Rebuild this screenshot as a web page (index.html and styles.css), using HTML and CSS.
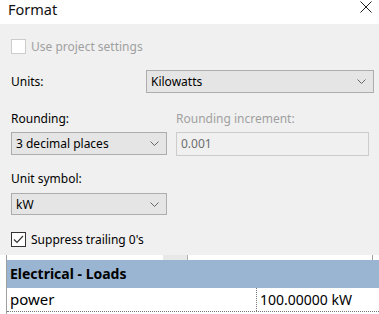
FILE: index.html
```html
<!DOCTYPE html>
<html>
<head>
    <title>Format</title>
    <link rel="stylesheet" href="styles.css">
</head>
<body>
    <div class="titlebar">
        <span class="title">Format</span>
        <svg class="close" width="12" height="12" viewBox="0 0 12 12">
            <path d="M0.5 0.5 L11.5 11.5 M11.5 0.5 L0.5 11.5" stroke="#222" stroke-width="1" fill="none"/>
        </svg>
    </div>

    <div class="panel">
        <div class="check-row disabled">
            <span class="box"></span>
            <span>Use project settings</span>
        </div>

        <div class="units-row">
            <span class="label">Units:</span>
            <div class="combo wide">
                <span>Kilowatts</span>
                <svg class="chev" width="9" height="5" viewBox="0 0 9 5"><path d="M0.5 0.5 L4.5 4.5 L8.5 0.5" stroke="#666" fill="none"/></svg>
            </div>
        </div>

        <div class="pair">
            <div class="col">
                <span class="label">Rounding:</span>
                <div class="combo">
                    <span>3 decimal places</span>
                    <svg class="chev" width="9" height="5" viewBox="0 0 9 5"><path d="M0.5 0.5 L4.5 4.5 L8.5 0.5" stroke="#666" fill="none"/></svg>
                </div>
            </div>
            <div class="col right">
                <span class="label muted">Rounding increment:</span>
                <div class="textbox">0.001</div>
            </div>
        </div>

        <div class="col symbol">
            <span class="label">Unit symbol:</span>
            <div class="combo">
                <span>kW</span>
                <svg class="chev" width="9" height="5" viewBox="0 0 9 5"><path d="M0.5 0.5 L4.5 4.5 L8.5 0.5" stroke="#666" fill="none"/></svg>
            </div>
        </div>

        <div class="check-row suppress">
            <span class="box checked">
                <svg width="13" height="13" viewBox="0 0 13 13"><path d="M2 6.5 L5 9.5 L11 3" stroke="#333" stroke-width="1.2" fill="none"/></svg>
            </span>
            <span>Suppress trailing 0's</span>
        </div>
    </div>

    <div class="grid">
        <div class="strip">
            <span class="thumb"></span>
            <span class="edge"></span>
        </div>
        <div class="group">Electrical - Loads</div>
        <div class="row">
            <span class="name">power</span>
            <span class="value">100.00000 kW</span>
        </div>
    </div>
</body>
</html>
```

FILE: styles.css
```css
body {
    margin: 0;
    width: 379px;
    height: 314px;
    overflow: hidden;
    background-color: #fff;
    font-family: "Noto Sans", "Open Sans", sans-serif;
    font-size: 12px;
    color: #000;
}

.titlebar {
    height: 24px;
    box-sizing: border-box;
    display: flex;
    align-items: flex-start;
    justify-content: space-between;
    padding: 2px 7px 0 8px;
    background-color: #fff;
}

.title {
    font-size: 14.5px;
    line-height: 14px;
    color: #111;
}

.close {
    margin-top: -1px;
}

.panel {
    height: 231px;
    box-sizing: border-box;
    padding: 14px 5px 0 11px;
    background-color: #f0f0f0;
}

.check-row {
    display: flex;
    align-items: center;
    gap: 5px;
    height: 16px;
}

.check-row.disabled {
    color: #a0a0a0;
}

.box {
    width: 13px;
    height: 13px;
    border: 1px solid #cccccc;
    background-color: #fff;
    display: flex;
}

.box.checked {
    border-color: #333;
}

.units-row {
    display: flex;
    align-items: center;
    margin-top: 16px;
}

.units-row .label {
    width: 135px;
}

.combo {
    display: flex;
    align-items: center;
    justify-content: space-between;
    box-sizing: border-box;
    height: 23px;
    width: 156px;
    padding: 0 7px 0 4px;
    border: 1px solid #adadad;
    background-color: #e5e5e5;
}

.combo.wide {
    width: 228px;
}

.pair {
    display: flex;
    margin-top: 18px;
}

.col {
    display: flex;
    flex-direction: column;
    gap: 5px;
}

.label {
    height: 16px;
    line-height: 16px;
}

.muted {
    color: #a0a0a0;
}

.right {
    margin-left: 9px;
}

.textbox {
    box-sizing: border-box;
    height: 24px;
    width: 193px;
    line-height: 22px;
    padding-left: 4px;
    border: 1px solid #cccccc;
    background-color: #f0f0f0;
    color: #6d6d6d;
}

.symbol {
    margin-top: 15px;
    gap: 6px;
}

.symbol .combo {
    height: 22px;
}

.suppress {
    margin-top: 16px;
}

.grid {
    height: 59px;
    border-left: 1px solid #a0a0a0;
    margin-left: 6px;
    background-color: #fff;
}

.strip {
    height: 5px;
    display: flex;
}

.thumb {
    width: 24px;
    height: 5px;
    margin-left: 156px;
    background-color: #e8e8e8;
    border-right: 1px solid #b0b0b0;
}

.edge {
    margin-left: auto;
    margin-right: 6px;
    width: 1px;
    background-color: #a0a0a0;
}

.group {
    height: 28px;
    line-height: 28px;
    padding-left: 3px;
    font-size: 14px;
    font-weight: bold;
    background-color: #9ab5d1;
}

.row {
    display: flex;
    height: 23px;
    line-height: 23px;
    font-size: 15px;
    border-bottom: 1px dotted #777;
}

.name {
    width: 246px;
    padding-left: 3px;
    border-right: 1px dotted #777;
}

.value {
    padding-left: 3px;
    font-size: 14px;
}
```
